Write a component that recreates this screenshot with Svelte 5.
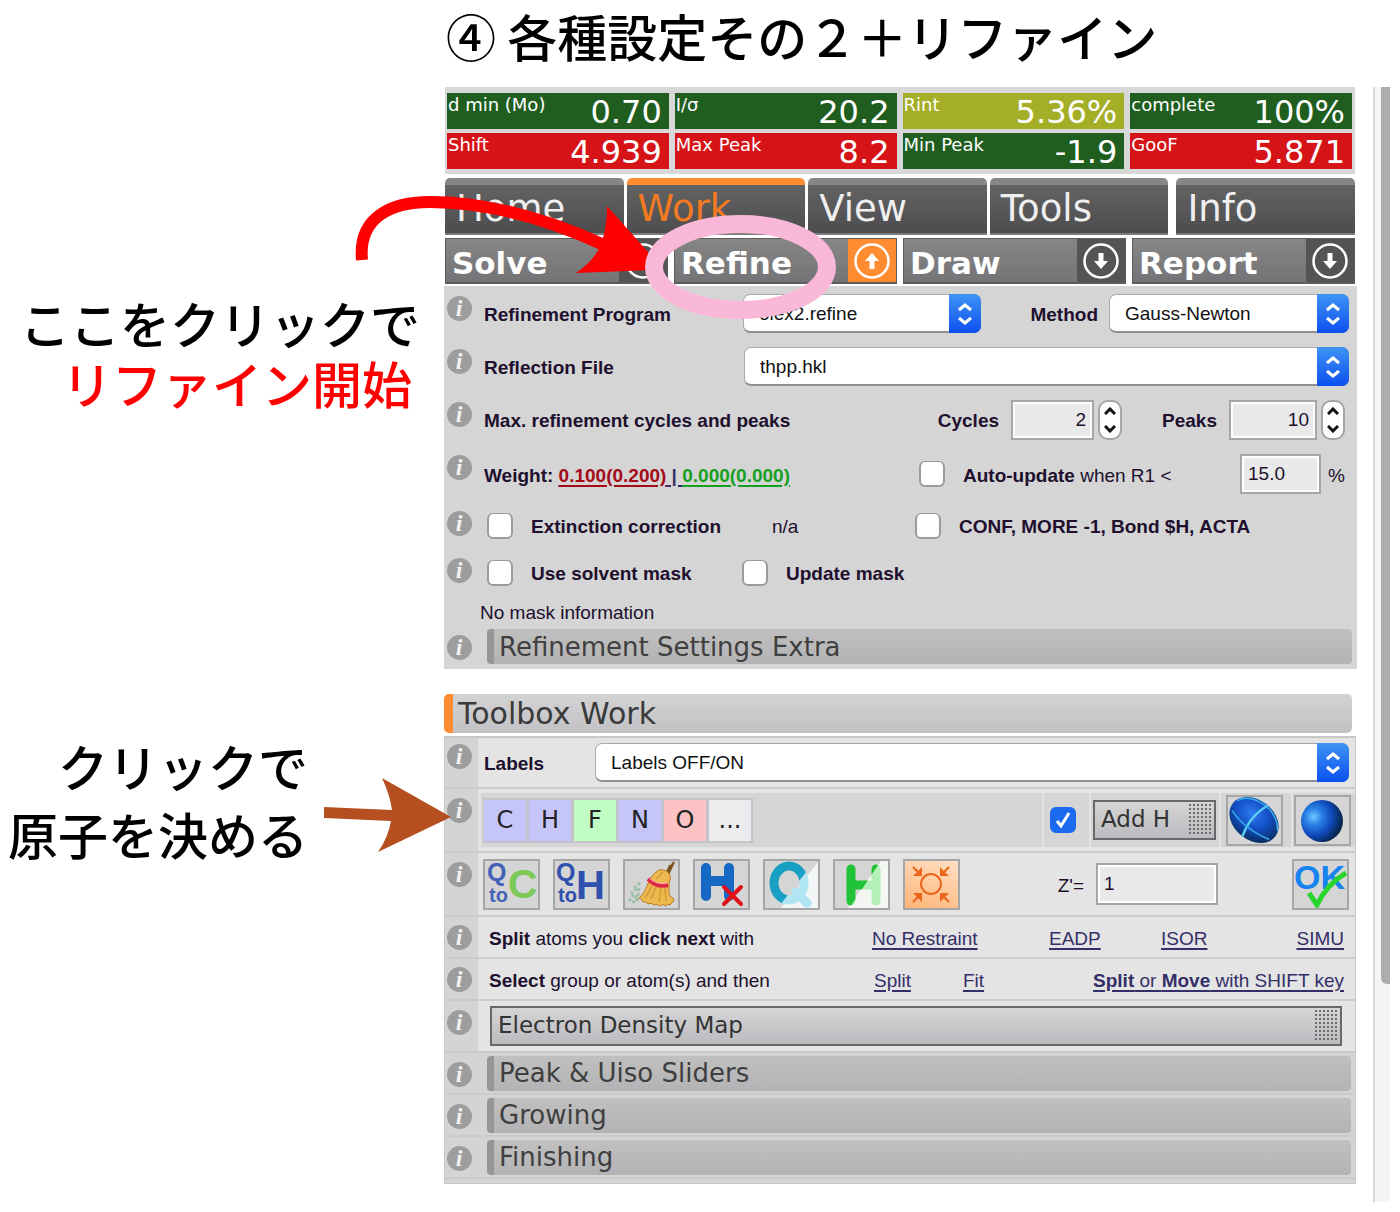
<script>
  let program = 'olex2.refine';
  let method = 'Gauss-Newton';
  let reflectionFile = 'thpp.hkl';
  let labelMode = 'Labels OFF/ON';
  let cycles = 2;
  let peaks = 10;
  let r1Limit = '15.0';
  let zPrime = '1';
  let autoUpdate = false;
  let extinction = false;
  let confMore = false;
  let solventMask = false;
  let updateMask = false;
  let addHChecked = true;

  const stats = [
    { label: 'd min (Mo)', value: '0.70', tone: 'good' },
    { label: 'I/σ', value: '20.2', tone: 'good' },
    { label: 'Rint', value: '5.36%', tone: 'fair' },
    { label: 'complete', value: '100%', tone: 'good' },
    { label: 'Shift', value: '4.939', tone: 'bad' },
    { label: 'Max Peak', value: '8.2', tone: 'bad' },
    { label: 'Min Peak', value: '-1.9', tone: 'good' },
    { label: 'GooF', value: '5.871', tone: 'bad' }
  ];

  const tabs = ['Home', 'Work', 'View', 'Tools', 'Info'];
  let activeTab = 'Work';

  const actions = ['Solve', 'Refine', 'Draw', 'Report'];
  let openAction = 'Refine';

  const atoms = [
    { symbol: 'C', kind: 'violet' },
    { symbol: 'H', kind: 'violet' },
    { symbol: 'F', kind: 'green' },
    { symbol: 'N', kind: 'violet' },
    { symbol: 'O', kind: 'pink' },
    { symbol: '...', kind: 'plain' }
  ];

  const sections = ['Peak & Uiso Sliders', 'Growing', 'Finishing'];
</script>

{#snippet info()}
  <div class="info">
    <svg width="25" height="25" viewBox="0 0 25 25" role="img" aria-label="info">
      <circle cx="12.5" cy="12.5" r="12.5" fill="#9d9d9d" />
      <text x="12" y="20" class="info-letter">i</text>
    </svg>
  </div>
{/snippet}

{#snippet chevrons()}
  <span class="chevrons">
    <svg width="16" height="24" viewBox="0 0 16 24" fill="none" stroke="#fff" stroke-width="3">
      <path d="M2 8 L8 3 L14 8 M2 16 L8 21 L14 16" />
    </svg>
  </span>
{/snippet}

<div class="page">
  <h1>④ 各種設定その２＋リファイン</h1>

  <div class="body">
    <aside>
      <p class="note note-refine">ここをクリックで<br /><span class="start">リファイン開始</span></p>
      <p class="note note-atoms">クリックで<br />原子を決める</p>
    </aside>

    <main>
      <div class="stats">
        {#each stats as stat}
          <div class="stat {stat.tone}">
            <span class="stat-label">{stat.label}</span>
            <span class="stat-value">{stat.value}</span>
          </div>
        {/each}
      </div>

      <nav class="tabs">
        {#each tabs as tab}
          <button class="tab" class:active={tab === activeTab} on:click={() => (activeTab = tab)}>{tab}</button>
        {/each}
      </nav>

      <div class="actions">
        {#each actions as action}
          <button class="action" class:open={action === openAction} on:click={() => (openAction = action)}>
            <span class="action-name">{action}</span>
            <span class="action-icon">
              <svg width="36" height="36" viewBox="0 0 36 36" fill="none" stroke="#fff">
                <circle cx="18" cy="18" r="16.5" stroke-width="2.5" />
                {#if action === openAction}
                  <path d="M18 26 V15" stroke-width="5" />
                  <path d="M11 18 L18 10 L25 18 Z" fill="#fff" stroke="none" />
                {:else}
                  <path d="M18 10 V21" stroke-width="5" />
                  <path d="M11 18 L18 26 L25 18 Z" fill="#fff" stroke="none" />
                {/if}
              </svg>
            </span>
          </button>
        {/each}
      </div>

      <section class="refine">
        <div class="row">
          {@render info()}
          <div class="cells program-cells">
            <label class="text" for="program"><b>Refinement Program</b></label>
            <div class="select">
              <select id="program" bind:value={program}><option>olex2.refine</option></select>
              {@render chevrons()}
            </div>
            <label class="text method-label" for="method"><b>Method</b></label>
            <div class="select">
              <select id="method" bind:value={method}><option>Gauss-Newton</option></select>
              {@render chevrons()}
            </div>
          </div>
        </div>

        <div class="row">
          {@render info()}
          <div class="cells file-cells">
            <label class="text" for="reflection"><b>Reflection File</b></label>
            <div class="select">
              <select id="reflection" bind:value={reflectionFile}><option>thpp.hkl</option></select>
              {@render chevrons()}
            </div>
          </div>
        </div>

        <div class="row">
          {@render info()}
          <div class="cells count-cells">
            <span class="text"><b>Max. refinement cycles and peaks</b></span>
            <label class="text" for="cycles"><b>Cycles</b></label>
            <input id="cycles" class="field number cycles" type="text" bind:value={cycles} />
            <span class="stepper">
              <button aria-label="More cycles" on:click={() => (cycles += 1)}>
                <svg width="12" height="8" viewBox="0 0 12 8" fill="none" stroke="#111" stroke-width="3"><path d="M1 7 L6 2 L11 7" /></svg>
              </button>
              <button aria-label="Fewer cycles" on:click={() => (cycles -= 1)}>
                <svg width="12" height="8" viewBox="0 0 12 8" fill="none" stroke="#111" stroke-width="3"><path d="M1 1 L6 6 L11 1" /></svg>
              </button>
            </span>
            <label class="text peaks-label" for="peaks"><b>Peaks</b></label>
            <input id="peaks" class="field number peaks" type="text" bind:value={peaks} />
            <span class="stepper">
              <button aria-label="More peaks" on:click={() => (peaks += 1)}>
                <svg width="12" height="8" viewBox="0 0 12 8" fill="none" stroke="#111" stroke-width="3"><path d="M1 7 L6 2 L11 7" /></svg>
              </button>
              <button aria-label="Fewer peaks" on:click={() => (peaks -= 1)}>
                <svg width="12" height="8" viewBox="0 0 12 8" fill="none" stroke="#111" stroke-width="3"><path d="M1 1 L6 6 L11 1" /></svg>
              </button>
            </span>
          </div>
        </div>

        <div class="row tall">
          {@render info()}
          <div class="cells weight-cells">
            <span class="text">
              <b>Weight: <a class="weight" href="#weight"><span class="weight-a">0.100(0.200)</span> | <span class="weight-b">0.000(0.000)</span></a></b>
            </span>
            <input id="auto" type="checkbox" bind:checked={autoUpdate} />
            <label class="text" for="auto"><b>Auto-update</b> when R1 &lt;</label>
            <input class="field" type="text" aria-label="R1 limit" bind:value={r1Limit} />
            <span class="text">%</span>
          </div>
        </div>

        <div class="row short">
          {@render info()}
          <div class="cells check-cells">
            <input id="extinction" type="checkbox" bind:checked={extinction} />
            <label class="text" for="extinction"><b>Extinction correction</b></label>
            <span class="text na">n/a</span>
            <input id="conf" type="checkbox" bind:checked={confMore} />
            <label class="text" for="conf"><b>CONF, MORE -1, Bond $H, ACTA</b></label>
          </div>
        </div>

        <div class="row short">
          {@render info()}
          <div class="cells mask-cells">
            <input id="solvent" type="checkbox" bind:checked={solventMask} />
            <label class="text" for="solvent"><b>Use solvent mask</b></label>
            <input id="update" type="checkbox" bind:checked={updateMask} />
            <label class="text" for="update"><b>Update mask</b></label>
          </div>
        </div>

        <p class="mask-info">No mask information</p>

        <div class="row section-row">
          {@render info()}
          <button class="section-bar">Refinement Settings Extra</button>
        </div>
      </section>

      <h2>Toolbox Work</h2>

      <section class="toolbox">
        <div class="row labels-row">
          {@render info()}
          <div class="cells label-cells">
            <label class="text" for="labels"><b>Labels</b></label>
            <div class="select">
              <select id="labels" bind:value={labelMode}><option>Labels OFF/ON</option></select>
              {@render chevrons()}
            </div>
          </div>
        </div>

        <div class="row tools-row">
          {@render info()}
          <div class="strip">
            <div class="strip-cell atoms">
              {#each atoms as atom}
                <button class="atom {atom.kind}">{atom.symbol}</button>
              {/each}
            </div>
            <div class="strip-cell tick-cell">
              <input type="checkbox" aria-label="Add H to all" bind:checked={addHChecked} />
            </div>
            <div class="strip-cell addh-cell">
              <button class="grip-button">Add H<span class="grip"></span></button>
            </div>
            <div class="strip-cell ellipsoid-cell">
              <button class="icon-button" aria-label="Ellipsoids">
                <svg width="54" height="48" viewBox="0 0 54 48" fill="none">
                  <defs>
                    <radialGradient id="blob" cx="0.4" cy="0.4" r="0.65">
                      <stop offset="0" stop-color="#2f7df0" />
                      <stop offset="0.5" stop-color="#1450c8" />
                      <stop offset="1" stop-color="#072c5c" />
                    </radialGradient>
                  </defs>
                  <g transform="rotate(38 26 23)">
                    <ellipse cx="26" cy="23" rx="27" ry="20" fill="url(#blob)" />
                    <path d="M28 3 Q20 22 27 43" stroke="#5ccdf5" stroke-width="2.5" />
                    <path d="M1 18 Q8 3 32 5 Q45 8 51 17 M3 29 Q24 36 50 29" stroke="#38b0e8" stroke-width="1.5" />
                  </g>
                </svg>
              </button>
            </div>
            <div class="strip-cell sphere-cell">
              <button class="icon-button" aria-label="Spheres">
                <svg width="54" height="48" viewBox="0 0 54 48">
                  <defs>
                    <radialGradient id="ball" cx="0.3" cy="0.4" r="0.68">
                      <stop offset="0" stop-color="#6cc8ff" />
                      <stop offset="0.3" stop-color="#2a80e4" />
                      <stop offset="0.65" stop-color="#0f48b8" />
                      <stop offset="1" stop-color="#06264e" />
                    </radialGradient>
                  </defs>
                  <circle cx="26" cy="24" r="21" fill="url(#ball)" />
                </svg>
              </button>
            </div>
          </div>
        </div>

        <div class="row tools-row">
          {@render info()}
          <div class="cells icon-cells">
            <button class="icon-button" aria-label="Q to C">
              <svg width="54" height="48" viewBox="0 0 54 48" class="glyphs">
                <text x="2" y="20" font-size="25" fill="#4463b6">Q</text>
                <text x="4" y="41" font-size="20" fill="#4463b6">to</text>
                <text x="23" y="37" font-size="41" fill="#7cc957">C</text>
              </svg>
            </button>
            <button class="icon-button" aria-label="Q to H">
              <svg width="54" height="48" viewBox="0 0 54 48" class="glyphs">
                <text x="1" y="20" font-size="25" fill="#2f50ad">Q</text>
                <text x="3" y="41" font-size="20" fill="#2f50ad">to</text>
                <text x="21" y="38" font-size="40" fill="#2f50ad">H</text>
              </svg>
            </button>
            <button class="icon-button" aria-label="Clean up">
              <svg width="54" height="48" viewBox="0 0 54 48">
                <path d="M4 40 l5 -7 M8 42 l4 -8 M6 33 l6 -6 M12 40 l2 -13 M9 27 l7 -6" stroke="#9dbfa6" stroke-width="3" stroke-dasharray="3 2" fill="none" />
                <path d="M49 1 L39 14 L42 16 Z M45 4 L41 14" fill="#7a5420" stroke="#7a5420" stroke-width="2" />
                <path d="M34 9 Q42 8 45 14 Q46 18 44 22 L44 33 Q45 36 49 38 Q48 42 45 44 Q42 42 41 45 Q38 42 35 45 Q32 42 29 44 Q26 41 23 43 Q21 40 18 41 Q17 38 14 37 Q20 32 24 20 Q28 12 34 9 Z" fill="#eeba50" stroke="#b57c22" stroke-width="1" />
                <path d="M31 26 L26 38 M36 27 L34 41 M40 27 L41 40 M27 25 L20 37 M38 11 L31 18" stroke="#d29a34" stroke-width="1.5" fill="none" />
                <path d="M23 18 Q32 27 43 24" stroke="#dd2745" stroke-width="4" fill="none" />
                <path d="M25 18 Q33 24 42 22" stroke="#ffb3bd" stroke-width="1" fill="none" />
              </svg>
            </button>
            <button class="icon-button" aria-label="Delete H">
              <svg width="54" height="48" viewBox="0 0 54 48" fill="none" stroke-linecap="round">
                <path d="M11 7 V35 M34 7 V35 M11 20 H34" stroke="#1568c4" stroke-width="10" />
                <path d="M29 26 L46 43 M46 26 L29 43" stroke="#e01018" stroke-width="4" />
              </svg>
            </button>
            <button class="icon-button" aria-label="Toggle Q peaks">
              <svg width="54" height="48" viewBox="0 0 54 48" fill="none" stroke-linecap="round">
                <path d="M54 0 V48 H15 Z" fill="#f3f6f7" />
                <clipPath id="q-left"><path d="M0 0 H50 L12 48 H0 Z" /></clipPath>
                <clipPath id="q-right"><path d="M54 0 V48 H12 L50 0 Z" /></clipPath>
                <g stroke-width="9">
                  <g clip-path="url(#q-left)" stroke="#17a0c4"><ellipse cx="24" cy="22" rx="15" ry="17" /></g>
                  <g clip-path="url(#q-right)" stroke="#afe6f2"><ellipse cx="24" cy="22" rx="15" ry="17" /><path d="M31 31 L42 42" /></g>
                </g>
              </svg>
            </button>
            <button class="icon-button" aria-label="Toggle H atoms">
              <svg width="54" height="48" viewBox="0 0 54 48" fill="none" stroke-linecap="round">
                <path d="M54 0 V48 H12 L46 0 Z" fill="#f3f6f3" />
                <clipPath id="h-left"><path d="M0 0 H46 L14 48 H0 Z" /></clipPath>
                <clipPath id="h-right"><path d="M54 0 V48 H14 L46 0 Z" /></clipPath>
                <path clip-path="url(#h-left)" d="M16 8 V40 M41 8 V40 M16 24 H41" stroke="#20c238" stroke-width="9" />
                <path clip-path="url(#h-right)" d="M16 8 V40 M41 8 V40 M16 24 H41" stroke="#b4f0b8" stroke-width="9" />
              </svg>
            </button>
            <button class="icon-button orange" aria-label="Centre">
              <svg width="54" height="48" viewBox="0 0 54 48" fill="none" stroke="#ea661c" stroke-width="2">
                <circle cx="26" cy="23" r="10" />
                <path d="M8 6 L15 13 M44 6 L37 13 M8 41 L15 34 M44 41 L37 34" />
                <path d="M17 6 V15 H8 Z M35 6 V15 H44 Z M17 41 V32 H8 Z M35 41 V32 H44 Z" fill="#ea661c" stroke="none" />
              </svg>
            </button>
            <label class="text z-label" for="zprime">Z'=</label>
            <input id="zprime" class="field zprime" type="text" bind:value={zPrime} />
            <button class="icon-button" aria-label="OK">
              <svg width="54" height="48" viewBox="0 0 54 48" class="glyphs">
                <text x="0" y="28" font-size="34" fill="#1683ee">OK</text>
                <path d="M15 32 L23 44 Q33 23 52 12" fill="none" stroke="#28d52c" stroke-width="5" />
              </svg>
            </button>
          </div>
        </div>

        <div class="row link-row">
          {@render info()}
          <div class="cells split-cells">
            <span class="text"><b>Split</b> atoms you <b>click next</b> with</span>
            <a href="#none">No Restraint</a>
            <a href="#eadp">EADP</a>
            <a href="#isor">ISOR</a>
            <a class="end" href="#simu">SIMU</a>
          </div>
        </div>

        <div class="row link-row">
          {@render info()}
          <div class="cells select-cells">
            <span class="text"><b>Select</b> group or atom(s) and then</span>
            <a href="#split">Split</a>
            <a href="#fit">Fit</a>
            <a class="end" href="#move"><b>Split</b> or <b>Move</b> with SHIFT key</a>
          </div>
        </div>

        <div class="row map-row">
          {@render info()}
          <div class="cells map-cells">
            <button class="grip-button">Electron Density Map<span class="grip"></span></button>
          </div>
        </div>

        {#each sections as section}
          <div class="row section-row">
            {@render info()}
            <button class="section-bar">{section}</button>
          </div>
        {/each}
      </section>
    </main>

    <div class="scrollbar"><div class="thumb"></div></div>
  </div>

  <!-- callouts lie over the panel -->
  <svg class="callout callout-refine" width="490" height="150" viewBox="350 180 490 150" fill="none">
    <path d="M362 260 C358 218 390 202 430 202 C485 202 545 218 604 245" stroke="#fe0000" stroke-width="12" />
    <path d="M607 206 L648 252 L652 270 L576 273 Q595 260 601 244 Q607 228 607 206 Z" fill="#fe0000" />
    <ellipse cx="740.5" cy="267" rx="86.5" ry="43" stroke="#fab8d8" stroke-width="18" />
  </svg>
  <svg class="callout callout-atoms" width="130" height="76" viewBox="323 777 130 76">
    <path d="M324 807 L392 810 Q390 795 382 778 L451 817 L378 852 Q388 838 391 821 L324 818 Z" fill="#b54f20" />
  </svg>
</div>

<style>
  :global(body) {
    background: #fff;
  }

  .page {
    position: relative;
    font-family: 'Liberation Sans', Arial, sans-serif;
    font-size: 19px;
    line-height: 22px;
    color: #20102e;
  }

  .page * {
    box-sizing: border-box;
  }

  h1 {
    margin: 0;
    padding-left: 446px;
    height: 87px;
    font-family: 'Noto Sans CJK JP', sans-serif;
    font-size: 50px;
    font-weight: 500;
    line-height: 70px;
    color: #000;
  }

  .body {
    display: flex;
    padding-right: 10px;
  }

  aside {
    flex: 0 0 444px;
    padding-top: 205px;
  }

  .note {
    margin: 0;
    font-family: 'Noto Sans CJK JP', sans-serif;
    font-size: 50px;
    font-weight: 500;
    text-align: right;
    color: #000;
  }

  .note-refine {
    padding-right: 24px;
    line-height: 60px;
  }

  .start {
    padding-right: 8px;
    color: #fe0000;
  }

  .note-atoms {
    padding: 319px 136px 0 0;
    line-height: 68px;
  }

  main {
    flex: 1;
    min-width: 0;
    padding-bottom: 18px;
  }

  button {
    margin: 0;
    padding: 0;
    border: 0;
    font-family: 'DejaVu Sans', sans-serif;
    cursor: pointer;
  }

  /* statistics */
  .stats {
    display: grid;
    grid-template-columns: repeat(4, 1fr);
    gap: 4px 6px;
    margin: 0 2px 0 1px;
    padding: 6px 3px 5px 2px;
    background: #d8d8d8;
    font-family: 'DejaVu Sans', sans-serif;
    color: #fff;
  }

  .stat {
    display: flex;
    justify-content: space-between;
    height: 36px;
    padding: 0 7px 0 1px;
  }

  .stat.good {
    background: #205e20;
  }

  .stat.fair {
    background: #a4ae26;
  }

  .stat.bad {
    background: #d61418;
  }

  .stat-label {
    font-size: 18px;
    line-height: 24px;
  }

  .stat-value {
    font-size: 32px;
    line-height: 38px;
  }

  /* tabs */
  .tabs {
    display: flex;
    gap: 3px;
    margin: 4px 2px 0 1px;
  }

  .tab {
    flex: 1;
    height: 57px;
    padding: 0 11px;
    border-top: 7px solid #868686;
    border-bottom: 2px solid #7c7c7c;
    border-radius: 5px 5px 0 0;
    background: linear-gradient(#636363, #4d4d50);
    font-size: 37px;
    line-height: 46px;
    text-align: left;
    color: #efefef;
  }

  .tab:last-child {
    margin-left: 5px;
  }

  .tab.active {
    border-top-color: #ff8c30;
    color: #f47a22;
  }

  .actions {
    display: grid;
    grid-template-columns: repeat(4, 1fr);
    gap: 6px;
    margin: 3px 2px 2px 1px;
  }

  .action {
    display: flex;
    justify-content: space-between;
    height: 46px;
    border: 1px solid #5c5c5c;
    border-bottom-width: 2px;
    background: linear-gradient(#868686, #747477);
    color: #fff;
  }

  .action-name {
    padding-left: 6px;
    font-size: 31px;
    font-weight: bold;
    line-height: 48px;
  }

  .action-icon {
    display: flex;
    align-items: center;
    justify-content: center;
    align-self: stretch;
    width: 48px;
    background: #545454;
  }

  .action.open .action-icon {
    background: #ff8c30;
  }

  /* rows */
  .row {
    display: flex;
    min-height: 53px;
  }

  .row.tall {
    min-height: 56px;
  }

  .row.short {
    min-height: 47px;
  }

  .info {
    flex: 0 0 33px;
    padding: 9px 0 0 3px;
  }

  .info svg {
    display: block;
  }

  .info-letter {
    font-family: 'Liberation Serif', serif;
    font-size: 24px;
    font-weight: bold;
    font-style: italic;
    text-anchor: middle;
    fill: #f2f2f2;
  }

  .cells {
    display: grid;
    flex: 1;
    align-items: center;
    min-width: 0;
    padding: 0 8px 0 7px;
  }

  .text {
    padding-top: 3px;
    white-space: nowrap;
  }

  .refine {
    padding-top: 1px;
    background: #d5d5d5;
  }

  .program-cells {
    grid-template-columns: 259px 238px 1fr 240px;
  }

  .method-label {
    padding-right: 11px;
    text-align: right;
  }

  .file-cells {
    grid-template-columns: 260px 1fr;
  }

  .count-cells {
    grid-template-columns: 1fr auto auto auto auto auto auto;
    padding-right: 12px;
  }

  .weight-cells {
    grid-template-columns: 1fr 44px 277px 81px 28px;
  }

  .weight-cells .text:last-child {
    padding-left: 7px;
  }

  .check-cells {
    grid-template-columns: 44px 241px 1fr 44px 390px;
    padding-left: 10px;
  }

  .mask-cells {
    grid-template-columns: 44px 211px 44px 1fr;
    padding-left: 10px;
  }

  .select {
    position: relative;
    height: 39px;
  }

  select {
    width: 100%;
    height: 100%;
    padding: 1px 40px 0 15px;
    appearance: none;
    border: 1px solid #a9a9a9;
    border-bottom: 2px solid #909090;
    border-radius: 7px;
    background: #fff;
    font: inherit;
    color: #111;
  }

  .chevrons {
    position: absolute;
    top: 0;
    right: 0;
    display: flex;
    align-items: center;
    justify-content: center;
    width: 32px;
    height: 100%;
    border-radius: 0 7px 7px 0;
    background: linear-gradient(#3f93f5, #0b50f0);
    pointer-events: none;
  }

  .field {
    width: 100%;
    height: 40px;
    padding: 0 6px;
    border: 2px solid #a6a6a6;
    border-radius: 0;
    background: #e9e9e9;
    box-shadow: inset 0 0 0 2px #fff;
    font: inherit;
    color: inherit;
  }

  .field.number {
    margin: 0 4px 0 12px;
    text-align: right;
  }

  .field.cycles {
    width: 83px;
  }

  .field.peaks {
    width: 88px;
  }

  .peaks-label {
    padding-left: 40px;
  }

  .stepper {
    display: flex;
    flex-direction: column;
    width: 24px;
    height: 40px;
    border: 2px solid #a6a6a6;
    border-radius: 10px;
    background: #fff;
  }

  .stepper button {
    display: flex;
    flex: 1;
    align-items: center;
    justify-content: center;
    background: none;
  }

  input[type='checkbox'] {
    width: 26px;
    height: 26px;
    margin: 0;
    appearance: none;
    border: 2px solid #9b9b9b;
    border-top-width: 1px;
    border-radius: 6px;
    background: #fff;
  }

  input[type='checkbox']:checked {
    border-color: #1c6af0;
    background: #1c6af0 url("data:image/svg+xml,%3Csvg xmlns='http://www.w3.org/2000/svg' viewBox='0 0 22 22'%3E%3Cpath d='M5 12 L9 17 L17 4' fill='none' stroke='white' stroke-width='3'/%3E%3C/svg%3E") center / 22px no-repeat;
  }

  a {
    justify-self: start;
    padding-top: 3px;
    color: #342f68;
    text-decoration: underline;
    text-decoration-thickness: 2px;
    text-underline-offset: 3px;
    white-space: nowrap;
  }

  a.end {
    justify-self: end;
  }

  .weight-a {
    color: #a50a18;
    text-decoration: underline 2px #a50a18;
  }

  .weight-b {
    color: #16a022;
    text-decoration: underline 2px #16a022;
  }

  .mask-info {
    margin: 0;
    padding: 6px 0 5px 36px;
  }

  .section-bar {
    flex: 1;
    height: 35px;
    margin: 0 5px 0 10px;
    padding: 0 5px;
    border-left: 7px solid #969696;
    border-radius: 4px;
    background: linear-gradient(#c0c0c0, #b3b3b5);
    font-size: 26px;
    line-height: 34px;
    text-align: left;
    color: #3f3f3f;
  }

  .refine .section-row {
    min-height: 40px;
  }

  .refine .section-row .info {
    padding-top: 6px;
  }

  h2 {
    margin: 25px 5px 3px 0;
    height: 39px;
    padding-left: 5px;
    border-left: 9px solid #ff8c30;
    border-radius: 5px;
    background: linear-gradient(#d3d3d3, #c2c2c6);
    font-family: 'DejaVu Sans', sans-serif;
    font-size: 30px;
    font-weight: normal;
    line-height: 40px;
    color: #3a3a3a;
  }

  /* toolbox */
  .toolbox {
    margin-right: 1px;
    padding-bottom: 4px;
    border: 1px solid #c8c8c8;
    border-top-width: 2px;
    background: #d4d4d4;
  }

  .toolbox .row {
    border-bottom: 2px solid #cbcbcb;
  }

  .toolbox .info {
    flex-basis: 32px;
    padding-left: 2px;
  }

  .toolbox .cells {
    margin-left: 1px;
    padding-left: 6px;
    padding-right: 6px;
    background: #e4e4e4;
  }

  .toolbox .labels-row {
    min-height: 51px;
  }

  .toolbox .labels-row .info {
    padding-top: 6px;
  }

  .toolbox .label-cells {
    grid-template-columns: 111px 1fr;
  }

  .tools-row {
    min-height: 64px;
  }

  .strip {
    display: flex;
    flex: 1;
    gap: 2px;
    margin-left: 1px;
    padding: 4px 0 4px 3px;
    background: #e4e4e4;
  }

  .strip-cell {
    display: flex;
    align-items: center;
    background: #d5d5d5;
  }

  .atoms {
    flex: 1;
    padding-left: 2px;
  }

  .atom {
    width: 45px;
    height: 45px;
    border: 2px solid #c3c3cb;
    border-left-width: 1px;
    font-size: 24px;
    line-height: 40px;
    color: #222;
  }

  .violet {
    background: #c5c5fa;
  }

  .green {
    background: #c0fdc2;
  }

  .pink {
    background: #fdc2c4;
  }

  .plain {
    background: #ececee;
  }

  .tick-cell {
    width: 45px;
    padding-left: 6px;
  }

  .addh-cell {
    width: 128px;
    padding-left: 2px;
  }

  .ellipsoid-cell {
    width: 70px;
    padding-left: 5px;
  }

  .sphere-cell {
    width: 62px;
    padding-left: 1px;
  }

  .grip-button {
    display: flex;
    align-items: center;
    justify-content: space-between;
    height: 40px;
    padding: 0 2px 3px 6px;
    border: 2px solid #68686a;
    background: linear-gradient(#d5d5d5, #bbbbc0);
    font-size: 23px;
    color: #333;
  }

  .addh-cell .grip-button {
    width: 123px;
  }

  .grip {
    width: 24px;
    height: 32px;
    background: radial-gradient(circle, #6c6c6c 1px, transparent 1px) 0 0 / 4px 4px;
  }

  .icon-button {
    width: 57px;
    height: 51px;
    border: 2px solid #a6a6a6;
    background: #d5d5d5;
    overflow: hidden;
  }

  .icon-button.orange {
    background: linear-gradient(200deg, #ffdfc4, #ffb577);
  }

  .icon-button svg {
    display: block;
  }

  .glyphs text {
    font-family: 'Liberation Sans', Arial, sans-serif;
    font-weight: bold;
  }

  .toolbox .icon-cells {
    grid-template-columns: repeat(7, 70px) 1fr 196px 57px;
    padding-left: 5px;
  }

  .z-label {
    padding-right: 12px;
    text-align: right;
  }

  .field.zprime {
    width: 122px;
    height: 42px;
  }

  .toolbox .link-row {
    min-height: 42px;
  }

  .toolbox .link-row .info {
    padding-top: 8px;
  }

  .toolbox .link-row .cells {
    padding-left: 11px;
    padding-right: 11px;
  }

  .split-cells {
    grid-template-columns: 1fr 177px 112px 136px 47px;
  }

  .select-cells {
    grid-template-columns: 1fr 89px 128px 253px;
  }

  .toolbox .map-row {
    min-height: 52px;
  }

  .toolbox .map-cells {
    padding-left: 12px;
    padding-right: 13px;
  }

  .toolbox .section-row {
    min-height: 42px;
  }

  .toolbox .section-bar {
    align-self: center;
    margin: 0 4px 0 10px;
  }

  /* scrollbar at the window's edge */
  .scrollbar {
    width: 17px;
    margin-left: 16px;
    padding-left: 6px;
    border-left: 2px solid #dadada;
    background: #f5f5f5;
  }

  .thumb {
    height: 897px;
    border-radius: 0 0 0 6px;
    background: #adadad;
  }

  .callout {
    position: absolute;
    pointer-events: none;
  }

  .callout-refine {
    top: 180px;
    left: 350px;
  }

  .callout-atoms {
    top: 777px;
    left: 323px;
  }
</style>
